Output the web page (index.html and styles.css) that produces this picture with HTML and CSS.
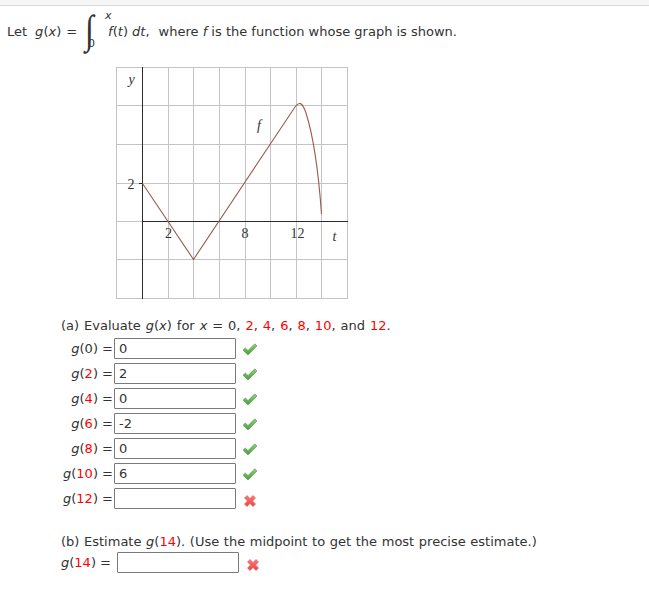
FILE: index.html
```html
<!DOCTYPE html>
<html>
<head>
<meta charset="utf-8">
<link rel="stylesheet" href="styles.css">
</head>
<body>
<div class="topbar"></div>
<div class="content">
  <p class="question">
    <span class="word">Let</span>
    <span class="math"><i>g</i>(<i>x</i>)</span>
    <span class="eq">=</span>
    <span class="integral"><span class="int-sign">∫</span><span class="limits"><span class="upper"><i>x</i></span><span class="lower">0</span></span></span>
    <span class="math tight"><i>f</i>(<i>t</i>) <i>dt</i>,</span>
    <span class="word">where <i>f</i> is the function whose graph is shown.</span>
  </p>

  <svg class="graph" width="232" height="232" viewBox="116 67 232 232" xmlns="http://www.w3.org/2000/svg">
    <rect x="116" y="67" width="232" height="232" fill="#fff"/>
    <g stroke="#c4c4c4" stroke-width="1" fill="none">
      <line x1="168.5" y1="67" x2="168.5" y2="299"/>
      <line x1="193.5" y1="67" x2="193.5" y2="299"/>
      <line x1="219.5" y1="67" x2="219.5" y2="299"/>
      <line x1="245.5" y1="67" x2="245.5" y2="299"/>
      <line x1="270.5" y1="67" x2="270.5" y2="299"/>
      <line x1="296.5" y1="67" x2="296.5" y2="299"/>
      <line x1="321.5" y1="67" x2="321.5" y2="299"/>
      <line x1="116" y1="105.5" x2="348" y2="105.5"/>
      <line x1="116" y1="144.5" x2="348" y2="144.5"/>
      <line x1="116" y1="183.5" x2="348" y2="183.5"/>
      <line x1="116" y1="221.5" x2="142" y2="221.5"/>
      <line x1="116" y1="259.5" x2="348" y2="259.5"/>
      <rect x="116.5" y="67.5" width="231" height="231"/>
    </g>
    <g stroke="#2b2b2b" stroke-width="1">
      <line x1="142.5" y1="67" x2="142.5" y2="299"/>
      <line x1="142.5" y1="221.5" x2="348" y2="221.5"/>
      <line x1="139" y1="183.5" x2="142.5" y2="183.5"/>
    </g>
    <path d="M142.5,183.5 L193.5,259.5 L295,107 C299,102 302,101 306,113 C312,132 318,165 321.5,214" fill="none" stroke="#9b5a50" stroke-width="1.1"/>
    <g class="gtext">
      <text x="131.5" y="84" class="it">y</text>
      <text x="259" y="130" class="it">f</text>
      <text x="131" y="189" class="num">2</text>
      <text x="168.5" y="238" class="num">2</text>
      <text x="245" y="238" class="num">8</text>
      <text x="297.5" y="238" class="num">12</text>
      <text x="334.5" y="241" class="it">t</text>
    </g>
  </svg>

  <section class="part-a">
    <p class="prompt prompt-a">(a) Evaluate <i>g</i>(<i>x</i>) for <i>x</i> = 0, <span class="red">2</span>, <span class="red">4</span>, <span class="red">6</span>, <span class="red">8</span>, <span class="red">10</span>, and <span class="red">12</span>.</p>
    <div class="answers">
      <label class="lbl"><i>g</i>(0) =</label>
      <div class="box">0</div>
      <svg class="ok" width="16" height="14" viewBox="0 0 16 14"><use href="#check"/></svg>

      <label class="lbl"><i>g</i>(<span class="red">2</span>) =</label>
      <div class="box">2</div>
      <svg class="ok" width="16" height="14" viewBox="0 0 16 14"><use href="#check"/></svg>

      <label class="lbl"><i>g</i>(<span class="red">4</span>) =</label>
      <div class="box">0</div>
      <svg class="ok" width="16" height="14" viewBox="0 0 16 14"><use href="#check"/></svg>

      <label class="lbl"><i>g</i>(<span class="red">6</span>) =</label>
      <div class="box">-2</div>
      <svg class="ok" width="16" height="14" viewBox="0 0 16 14"><use href="#check"/></svg>

      <label class="lbl"><i>g</i>(<span class="red">8</span>) =</label>
      <div class="box">0</div>
      <svg class="ok" width="16" height="14" viewBox="0 0 16 14"><use href="#check"/></svg>

      <label class="lbl"><i>g</i>(<span class="red">10</span>) =</label>
      <div class="box">6</div>
      <svg class="ok" width="16" height="14" viewBox="0 0 16 14"><use href="#check"/></svg>

      <label class="lbl"><i>g</i>(<span class="red">12</span>) =</label>
      <div class="box"></div>
      <svg class="bad" width="16" height="16" viewBox="0 0 16 16"><use href="#cross"/></svg>
    </div>
  </section>

  <section class="part-b">
    <p class="prompt prompt-b">(b) Estimate <i>g</i>(<span class="red">14</span>). (Use the midpoint to get the most precise estimate.)</p>
    <div class="answer-b">
      <label class="lbl-b"><i>g</i>(<span class="red">14</span>) =</label>
      <div class="box"></div>
      <svg class="bad" width="16" height="16" viewBox="0 0 16 16"><use href="#cross"/></svg>
    </div>
  </section>
</div>

<svg class="defs" width="0" height="0" xmlns="http://www.w3.org/2000/svg">
  <defs>
    <linearGradient id="gg" x1="0" y1="0" x2="0" y2="1">
      <stop offset="0" stop-color="#8fd17c"/>
      <stop offset="1" stop-color="#4b9c3e"/>
    </linearGradient>
    <linearGradient id="rg" x1="0" y1="0" x2="0" y2="1">
      <stop offset="0" stop-color="#f77"/>
      <stop offset="1" stop-color="#e34848"/>
    </linearGradient>
    <symbol id="check" viewBox="0 0 16 14">
      <path d="M1,7.2 L3.3,5 L6,7.6 L12.8,0.8 L15,3 L6,12 Z" fill="url(#gg)" stroke="#4e9a42" stroke-width="0.6" stroke-linejoin="round"/>
    </symbol>
    <symbol id="cross" viewBox="0 0 16 16">
      <path d="M2.5,5 L5,2.5 L8,5.5 L11,2.5 L13.5,5 L10.5,8 L13.5,11 L11,13.5 L8,10.5 L5,13.5 L2.5,11 L5.5,8 Z" fill="url(#rg)" stroke="#e45050" stroke-width="0.6" stroke-linejoin="round"/>
    </symbol>
  </defs>
</svg>
</body>
</html>
```

FILE: styles.css
```css
body {
  margin: 0;
  font-family: "DejaVu Sans", Verdana, sans-serif;
  font-size: 13px;
  color: #333;
  background: #fff;
}

.topbar {
  height: 5px;
  background: #f6f6f6;
  border-bottom: 1px solid #d8d8d8;
}

.content {
  padding: 0 7px;
}

.question {
  margin: 0;
  padding-top: 5px;
  height: 40px;
  display: flex;
  align-items: center;
  white-space: nowrap;
}

.question .word + .math {
  margin-left: 8px;
}

.question .eq {
  margin-left: 5px;
}

.question .math + .word {
  margin-left: 9px;
}

.integral {
  display: inline-flex;
  height: 40px;
  margin-left: 7px;
}

.int-sign {
  display: inline-block;
  font-family: "Liberation Serif", "Times New Roman", serif;
  font-size: 40px;
  line-height: 38px;
  font-weight: 300;
  transform: scaleX(0.8);
}

.limits {
  display: flex;
  flex-direction: column;
  justify-content: space-between;
  font-size: 11px;
  line-height: 12px;
  margin-left: -11px;
  width: 24px;
}

.limits .upper {
  padding-left: 21px;
  margin-top: -1px;
}

.limits .lower {
  padding-left: 4px;
  margin-bottom: 1px;
}

.graph {
  display: block;
  margin: 16px 0 0 109px;
}

.gtext text {
  font-family: "Liberation Serif", "Times New Roman", serif;
  font-size: 14px;
  fill: #333;
  text-anchor: middle;
}

.gtext .it {
  font-style: italic;
}

.red {
  color: #f00;
}

.part-a {
  margin: 19px 0 0 54px;
}

.prompt {
  margin: 0;
  height: 16px;
  line-height: 16px;
  white-space: nowrap;
}

.prompt-a {
  word-spacing: 0.8px;
}

.prompt-b {
  word-spacing: 0.5px;
}

.answers {
  margin-top: 4px;
  display: grid;
  grid-template-columns: 53px 122px 22px;
  grid-auto-rows: 21px;
  row-gap: 4px;
  align-items: center;
}

.lbl {
  text-align: right;
  padding-right: 1px;
  white-space: nowrap;
}

.box {
  box-sizing: border-box;
  width: 122px;
  height: 21px;
  border: 1px solid #7a7a7a;
  border-radius: 1px;
  padding: 0 4px;
  line-height: 19px;
  color: #333;
  background: #fff;
}

.ok {
  display: block;
  margin: 2px 0 0 6px;
}

.bad {
  display: block;
  margin: 4px 0 0 6px;
}

.part-b {
  margin: 25px 0 0 54px;
}

.answer-b {
  margin-top: 2px;
  display: flex;
  align-items: center;
  height: 21px;
}

.lbl-b {
  white-space: nowrap;
  margin-right: 6px;
}

.answer-b .bad {
  margin-left: 6px;
  margin-top: 4px;
}

.defs {
  position: absolute;
  width: 0;
  height: 0;
}
```
